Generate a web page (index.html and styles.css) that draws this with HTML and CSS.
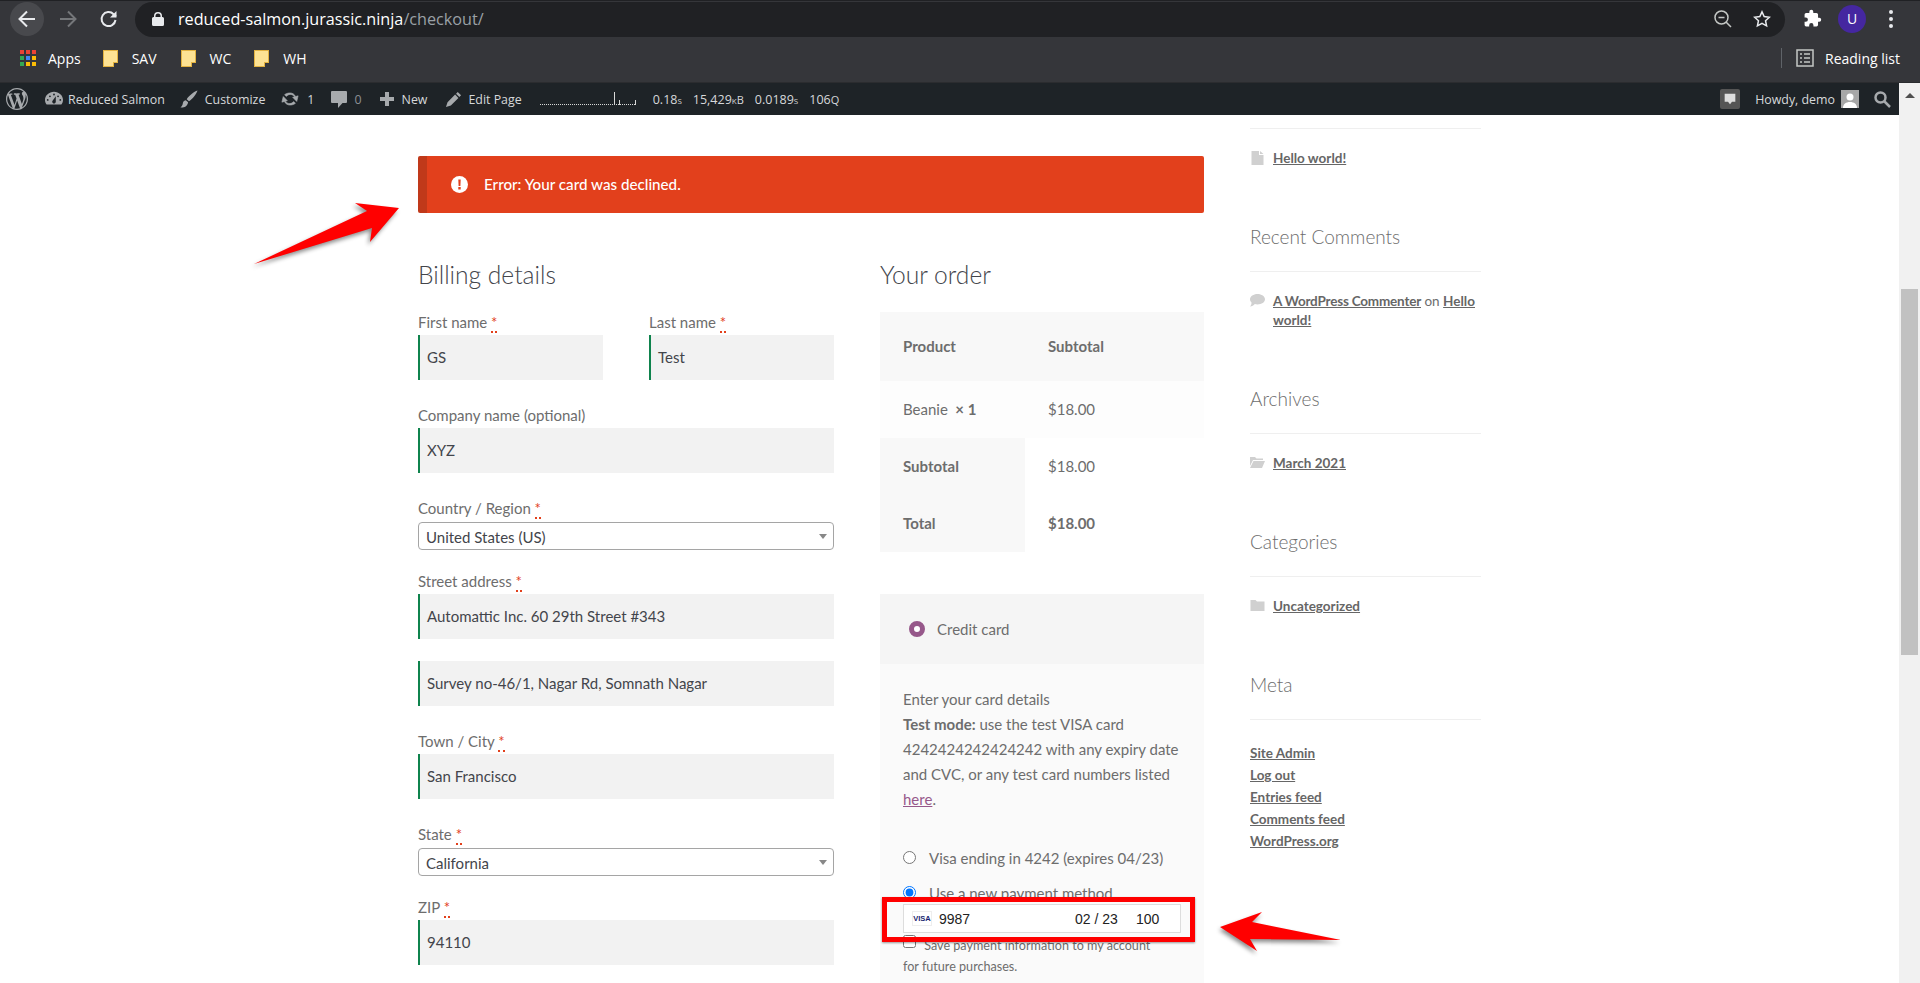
FILE: index.html
```html
<!DOCTYPE html>
<html lang="en">
<head>
    <meta charset="UTF-8">
    <title>Checkout - Reduced Salmon</title>
    <link rel="stylesheet" href="styles.css">
</head>
<body>
    <div class="toolbar">
        <div class="nav-btn nav-back">
            <svg width="20" height="20" viewBox="0 0 20 20" fill="none" stroke="#e8eaed" stroke-width="2"><path d="M18 10H3M10 2.5L2.5 10l7.5 7.5"/></svg>
        </div>
        <div class="nav-btn">
            <svg width="20" height="20" viewBox="0 0 20 20" fill="none" stroke="#75777a" stroke-width="2"><path d="M2 10h15M10 2.5l7.5 7.5-7.5 7.5"/></svg>
        </div>
        <div class="nav-btn">
            <svg width="20" height="20" viewBox="0 0 20 20" fill="none" stroke="#e8eaed" stroke-width="2"><path d="M16.5 11a7 7 0 1 1-1.9-5.8L17 7.5"/><path d="M17.5 2v6.5H11" fill="#e8eaed" stroke="none"/></svg>
        </div>
        <div class="omnibox">
            <svg class="lock" width="12" height="14" viewBox="0 0 12 14"><path d="M2 5V4a4 4 0 0 1 8 0v1h.5A1.500 1.500 0 0 1 12 6.500V12.500A1.500 1.500 0 0 1 10.500 14h-9A1.500 1.500 0 0 1 0 12.500V6.500A1.500 1.500 0 0 1 1.500 5zM3.500 5h5V4a2.500 2.500 0 0 0-5 0z" fill="#e8eaed" fill-rule="evenodd"/></svg>
            <span class="url">reduced-salmon.jurassic.ninja<span class="url-path">/checkout/</span></span>
            <svg class="omni-zoom" width="18" height="18" viewBox="0 0 18 18" fill="none" stroke="#c4c7c5" stroke-width="1.500"><circle cx="7.500" cy="7.500" r="6.500"/><path d="M4.500 7.500h6M12 12l5 5"/></svg>
            <svg class="omni-star" width="18" height="18" viewBox="0 0 24 24" fill="none" stroke="#e8eaed" stroke-width="2"><path d="M12 2.500l2.900 6.300 6.900.8-5.100 4.700 1.400 6.800-6.100-3.400-6.100 3.400 1.400-6.800L2.200 9.600l6.900-.8z"/></svg>
        </div>
        <svg class="puzzle" width="19" height="19" viewBox="0 0 24 24" fill="#fff"><path d="M20.500 11H19V7a2 2 0 0 0-2-2h-4V3.500a2.500 2.500 0 0 0-5 0V5H4a2 2 0 0 0-2 2v3.800h1.500a2.700 2.700 0 0 1 0 5.400H2V20a2 2 0 0 0 2 2h3.800v-1.500a2.700 2.700 0 0 1 5.400 0V22H17a2 2 0 0 0 2-2v-4h1.500a2.500 2.500 0 0 0 0-5z"/></svg>
        <div class="avatar">U</div>
        <div class="menu-dots"><i></i><i></i><i></i></div>
    </div>

    <div class="bookmarks">
        <svg class="apps-icon" width="16" height="16" viewBox="0 0 16 16">
            <rect width="4" height="4" fill="#ea4335"/><rect x="6" width="4" height="4" fill="#ea4335"/><rect x="12" width="4" height="4" fill="#ea4335"/>
            <rect y="6" width="4" height="4" fill="#34a853"/><rect x="6" y="6" width="4" height="4" fill="#4285f4"/><rect x="12" y="6" width="4" height="4" fill="#fbbc05"/>
            <rect y="12" width="4" height="4" fill="#34a853"/><rect x="6" y="12" width="4" height="4" fill="#fbbc05"/><rect x="12" y="12" width="4" height="4" fill="#fbbc05"/>
        </svg>
        <span class="bm-label bm-apps">Apps</span>
        <i class="bm-note"></i><span class="bm-label bm-sav">SAV</span>
        <i class="bm-note"></i><span class="bm-label bm-wc">WC</span>
        <i class="bm-note"></i><span class="bm-label">WH</span>
        <div class="reading-list">
            <svg width="18" height="18" viewBox="0 0 18 18" fill="none" stroke="#c4c7c5" stroke-width="1.500"><rect x="1" y="1" width="16" height="16"/><path d="M4 5h2M8 5h6M4 9h2M8 9h6M4 13h2M8 13h6"/></svg>
            <span>Reading list</span>
        </div>
    </div>

    <div class="viewport">
        <div class="window">
            <div class="adminbar">
                <svg class="ab-wp" width="22" height="22" viewBox="0 0 20 20" fill="#a7aaad"><path d="M20 10c0-5.510-4.490-10-10-10C4.480 0 0 4.490 0 10c0 5.520 4.480 10 10 10 5.510 0 10-4.480 10-10zM7.780 15.370L4.370 6.220c.550-.020 1.170-.080 1.170-.080.500-.060.440-1.130-.060-1.110 0 0-1.450.110-2.370.110-.180 0-.370 0-.580-.010C4.120 2.690 6.870 1.110 10 1.110c2.330 0 4.450.870 6.050 2.340-.680-.110-1.650.390-1.650 1.580 0 .740.450 1.360.900 2.100.350.610.550 1.360.550 2.460 0 1.490-1.400 5-1.400 5l-3.030-8.370c.540-.020.820-.170.820-.170.500-.050.440-1.250-.060-1.220 0 0-1.440.120-2.380.120-.870 0-2.330-.120-2.330-.120-.500-.030-.560 1.200-.060 1.220l.920.080 1.260 3.410zM17.410 10c.240-.640.740-1.870.430-4.250.700 1.290 1.050 2.710 1.050 4.250 0 3.290-1.730 6.240-4.400 7.780.970-2.590 1.940-5.200 2.920-7.780zM6.100 18.090C3.120 16.650 1.110 13.530 1.110 10c0-1.300.230-2.480.720-3.590C3.250 10.300 4.670 14.200 6.100 18.090zm4.030-6.630l2.580 6.980c-.860.290-1.760.450-2.710.450-.790 0-1.570-.110-2.290-.330.810-2.380 1.620-4.740 2.420-7.100z"/></svg>
                <svg class="ab-icon ab-gauge" width="18" height="18" viewBox="0 0 20 20" fill="#a7aaad" fill-rule="evenodd"><path d="M1.800 16h16.400c1.100-1.400 1.800-3.100 1.800-5 0-4.900-4.500-9-10-9S0 6.100 0 11c0 1.900.700 3.600 1.800 5zM10 4a1 1 0 1 1 0 2 1 1 0 0 1 0-2zM5.500 6a1 1 0 1 1 0 2 1 1 0 0 1 0-2zm9 0a1 1 0 1 1 0 2 1 1 0 0 1 0-2zM3 10a1 1 0 1 1 0 2 1 1 0 0 1 0-2zm14 0a1 1 0 1 1 0 2 1 1 0 0 1 0-2zM12 7v6a2 2 0 1 1-3.400-1.400z"/></svg>
                <span class="ab-text ab-site">Reduced Salmon</span>
                <svg class="ab-icon" width="18" height="18" viewBox="0 0 18 18" fill="#a7aaad"><path d="M17.500.500c-3.500 1.200-8.500 5-10.800 8.700l2.300 2C12.800 8.800 16.500 4 17.500.500zM5.800 10.200C3.500 10.500 3 12 2.800 13.500 2.600 15 2 16.300.500 17.500c3 .300 6.800-.400 7.600-5.200z"/></svg>
                <span class="ab-text ab-custom">Customize</span>
                <svg class="ab-icon" width="18" height="18" viewBox="0 0 20 20" fill="#a7aaad" stroke="#a7aaad" stroke-width=".7"><path d="M10.200 3.300c2.700 0 5 1.700 6 4l2.800-.800-1.500 6.200-4.500-4.600 2.200-.500c-.800-1.400-3-2.800-5-2.700-1.700.100-3.200.900-4.200 2.200L4 5.300c1.400-1.300 3.600-2 6.200-2zM2.500 7.300L7 11.900l-2.200.500c.800 1.400 3 2.800 5 2.700 1.700-.100 3.200-.900 4.200-2.200l2 1.800c-1.400 1.300-3.600 2-6.200 2-2.700 0-5-1.700-6-4l-2.800.800z"/></svg>
                <span class="ab-text ab-count">1</span>
                <svg class="ab-icon" width="18" height="18" viewBox="0 0 18 18" fill="#a7aaad"><path d="M2 1h14a1 1 0 0 1 1 1v10a1 1 0 0 1-1 1h-3.500L8 18v-5H2a1 1 0 0 1-1-1V2a1 1 0 0 1 1-1z"/></svg>
                <span class="ab-text ab-zero">0</span>
                <svg class="ab-icon" width="14" height="14" viewBox="0 0 14 14" fill="#a7aaad"><path d="M5 0h4v5h5v4H9v5H5V9H0V5h5z"/></svg>
                <span class="ab-text ab-new">New</span>
                <svg class="ab-icon" width="17" height="17" viewBox="0 0 18 18" fill="#a7aaad"><path d="M13.500 1l3.500 3.500-1.800 1.800-3.500-3.500zM10.700 3.800l3.500 3.500-8 8L1 17l1.700-5.200z"/></svg>
                <span class="ab-text ab-edit">Edit Page</span>
                <svg class="ab-chart" width="96" height="14" viewBox="0 0 96 14" fill="none" stroke="#d8d8d8"><path d="M0 13.500h96" stroke-dasharray="1 1"/><path d="M74.500 1v13M79.500 9v5M95.500 9v5"/></svg>
                <span class="ab-stat">0.18<small>s</small></span>
                <span class="ab-stat">15,429<small>kB</small></span>
                <span class="ab-stat">0.0189<small>s</small></span>
                <span class="ab-stat">106<small>Q</small></span>
                <div class="ab-right">
                    <div class="ab-note"><svg width="12" height="12" viewBox="0 0 18 18" fill="#ddd"><path d="M1 1h16v12h-5l-3 4-3-4H1z"/></svg></div>
                    <span class="ab-text ab-howdy">Howdy, demo</span>
                    <div class="ab-avatar"><svg width="16" height="16" viewBox="0 0 16 16" fill="#fff"><circle cx="8" cy="5" r="3.500"/><path d="M1 16c0-4 3-6 7-6s7 2 7 6z"/></svg></div>
                    <svg class="ab-search" width="17" height="17" viewBox="0 0 17 17" fill="none" stroke="#a7aaad" stroke-width="2.500"><circle cx="6.500" cy="6.500" r="5"/><path d="M10.500 10.500l5.500 5.500"/></svg>
                </div>
            </div>

            <div class="page">
                <main class="main">
                    <div class="notice">
                        <svg width="17" height="17" viewBox="0 0 17 17"><circle cx="8.500" cy="8.500" r="8.500" fill="#fff"/><path d="M7.300 3.500h2.400l-.3 6.500H7.600zM7.300 11h2.400v2.400H7.300z" fill="#e2401c"/></svg>
                        <span>Error: Your card was declined.</span>
                    </div>

                    <div class="checkout">
                        <section class="billing">
                            <h3>Billing details</h3>
                            <div class="field-row">
                                <div class="field">
                                    <label>First name <abbr>*</abbr></label>
                                    <div class="input-box">GS</div>
                                </div>
                                <div class="field">
                                    <label>Last name <abbr>*</abbr></label>
                                    <div class="input-box">Test</div>
                                </div>
                            </div>
                            <div class="field">
                                <label>Company name (optional)</label>
                                <div class="input-box">XYZ</div>
                            </div>
                            <div class="field field-select">
                                <label>Country / Region <abbr>*</abbr></label>
                                <div class="select-box">United States (US)</div>
                            </div>
                            <div class="field">
                                <label>Street address <abbr>*</abbr></label>
                                <div class="input-box">Automattic Inc. 60 29th Street #343</div>
                            </div>
                            <div class="field">
                                <div class="input-box">Survey no-46/1, Nagar Rd, Somnath Nagar</div>
                            </div>
                            <div class="field">
                                <label>Town / City <abbr>*</abbr></label>
                                <div class="input-box">San Francisco</div>
                            </div>
                            <div class="field field-select">
                                <label>State <abbr>*</abbr></label>
                                <div class="select-box">California</div>
                            </div>
                            <div class="field">
                                <label>ZIP <abbr>*</abbr></label>
                                <div class="input-box">94110</div>
                            </div>
                        </section>

                        <section class="order">
                            <h3>Your order</h3>
                            <table class="order-table">
                                <thead>
                                    <tr><th>Product</th><th>Subtotal</th></tr>
                                </thead>
                                <tbody>
                                    <tr><td>Beanie <strong>&nbsp;× 1</strong></td><td>$18.00</td></tr>
                                </tbody>
                                <tfoot>
                                    <tr><th>Subtotal</th><td>$18.00</td></tr>
                                    <tr><th>Total</th><td><strong>$18.00</strong></td></tr>
                                </tfoot>
                            </table>

                            <div class="payment">
                                <div class="payment-head">
                                    <span class="pay-radio"></span>
                                    <span>Credit card</span>
                                </div>
                                <div class="payment-body">
                                    <p>Enter your card details<br>
                                    <strong>Test mode:</strong> use the test VISA card 4242424242424242 with any expiry date and CVC, or any test card numbers listed <a href="#">here</a>.</p>
                                    <div class="saved-row"><input type="radio" name="card"><span>Visa ending in 4242 (expires 04/23)</span></div>
                                    <div class="saved-row"><input type="radio" name="card" checked><span>Use a new payment method</span></div>
                                    <div class="card-input">
                                        <span class="visa-logo">VISA</span>
                                        <span class="card-num">9987</span>
                                        <span class="card-exp">02 / 23</span>
                                        <span class="card-cvc">100</span>
                                    </div>
                                    <div class="save-row">
                                        <input type="checkbox">
                                        <span>Save payment information to my account<br>for future purchases.</span>
                                    </div>
                                </div>
                            </div>
                        </section>
                    </div>
                </main>

                <aside class="sidebar">
                    <div class="widget-line"></div>
                    <ul class="widget-list widget-first">
                        <li>
                            <svg width="12" height="14" viewBox="0 0 12 14" fill="#d0d0d0"><path d="M0 0h7.500v4H12v10H0zM8.500 0L12 3H8.500z"/></svg>
                            <a href="#">Hello world!</a>
                        </li>
                    </ul>
                    <h4>Recent Comments</h4>
                    <ul class="widget-list">
                        <li>
                            <svg class="icon-comment" width="15" height="13" viewBox="0 0 15 13" fill="#d0d0d0"><path d="M7.500 0C11.600 0 15 2.300 15 5.200s-3.400 5.200-7.500 5.200c-1 0-1.900-.1-2.700-.4C3.600 11.500 2 12.500 0 12.500c1-1 1.600-2.200 1.500-4C.6 7.600 0 6.500 0 5.200 0 2.300 3.400 0 7.500 0z"/></svg>
                            <span><a class="commenter" href="#">A WordPress Commenter</a> on <a href="#">Hello world!</a></span>
                        </li>
                    </ul>
                    <h4>Archives</h4>
                    <ul class="widget-list">
                        <li>
                            <svg width="15" height="12" viewBox="0 0 15 12" fill="#d0d0d0"><path d="M0 1h5l1.500 1.500H13V4H3L0 10zM3.500 5H15l-3 7H0z"/></svg>
                            <a href="#">March 2021</a>
                        </li>
                    </ul>
                    <h4>Categories</h4>
                    <ul class="widget-list">
                        <li>
                            <svg width="14" height="12" viewBox="0 0 14 12" fill="#d0d0d0"><path d="M0 1h5l1.500 1.500H14V12H0z"/></svg>
                            <a href="#">Uncategorized</a>
                        </li>
                    </ul>
                    <h4>Meta</h4>
                    <ul class="meta-list">
                        <li><a href="#">Site Admin</a></li>
                        <li><a href="#">Log out</a></li>
                        <li><a href="#">Entries feed</a></li>
                        <li><a href="#">Comments feed</a></li>
                        <li><a href="#">WordPress.org</a></li>
                    </ul>
                </aside>

                <!-- screenshot annotations -->
                <svg class="arrow arrow-left" width="160" height="75" viewBox="0 0 160 75"><path d="M148 11L104 6l12 8L3 67l118-36-2 14z" fill="#ff0000" style="filter: drop-shadow(-2px 3px 2px rgba(0,0,0,.45))"/></svg>
                <div class="red-box"></div>
                <svg class="arrow arrow-right" width="130" height="50" viewBox="0 0 130 50"><path d="M5 20l42-15-10 10 89 18-91-1 7 12z" fill="#ff0000" style="filter: drop-shadow(-1px 3px 2px rgba(0,0,0,.45))"/></svg>
            </div>
        </div>
        <div class="scrollbar">
            <i class="scroll-up"></i>
            <div class="scroll-thumb"></div>
        </div>
    </div>
</body>
</html>
```

FILE: styles.css
```css
/* general */
html, body {
    margin: 0;
    height: 983px;
    overflow: hidden;
}

body {
    font-family: 'Lato', sans-serif;
    font-size: 15px;
    color: #6d6d6d;
    background-color: #35363a;
}

/* browser chrome */
.toolbar {
    height: 35px;
    border-top: 1px solid #202124;
    background-color: #35363a;
    display: flex;
    align-items: center;
    padding-left: 10px;
    font-family: 'Open Sans', sans-serif;
}

.nav-btn {
    width: 34px;
    height: 34px;
    border-radius: 50%;
    display: flex;
    align-items: center;
    justify-content: center;
}

.nav-btn + .nav-btn {
    margin-left: 7px;
}

.nav-back {
    background-color: #48494d;
}

.omnibox {
    width: 1650px;
    height: 35px;
    margin-left: 9px;
    margin-top: 1px;
    border-radius: 18px;
    background-color: #202124;
    display: flex;
    align-items: center;
    color: #fff;
    font-size: 16.2px;
}

.lock {
    margin-left: 17px;
    margin-right: 14px;
}

.url-path {
    color: #9aa0a6;
}

.omni-zoom {
    margin-left: auto;
}

.omni-star {
    margin-left: 21px;
    margin-right: 14px;
}

.puzzle {
    margin-left: 18px;
}

.avatar {
    width: 28px;
    height: 28px;
    margin-left: 16px;
    border-radius: 50%;
    background-color: #4527a0;
    color: #fff;
    font-size: 14px;
    display: flex;
    align-items: center;
    justify-content: center;
}

.menu-dots {
    margin-left: 23px;
    display: flex;
    flex-direction: column;
    gap: 3px;
}

.menu-dots i {
    width: 4px;
    height: 4px;
    border-radius: 50%;
    background-color: #e8eaed;
}

.bookmarks {
    height: 44px;
    padding-bottom: 2px;
    border-bottom: 1px solid #2b2c2f;
    background-color: #35363a;
    display: flex;
    align-items: center;
    padding-left: 20px;
    font-family: 'Open Sans', sans-serif;
    font-size: 14px;
    color: #fff;
}

.apps-icon {
    margin-right: 12px;
}

.bm-note {
    position: relative;
    width: 15px;
    height: 17px;
    background-color: #fde293;
    border: 1px solid #e3b341;
    box-sizing: border-box;
    margin-right: 14px;
}

.bm-note::after {
    content: "";
    position: absolute;
    right: -1px;
    bottom: -1px;
    width: 4px;
    height: 4px;
    background-color: #35363a;
    border-top: 1px solid #e3b341;
    border-left: 1px solid #e3b341;
}

.bm-label {
    margin-right: 27px;
}

.bm-apps {
    margin-right: 22px;
}

.bm-sav {
    margin-right: 24px;
}

.bm-wc {
    margin-right: 23px;
}

.reading-list {
    margin-left: auto;
    width: 139px;
    height: 20px;
    box-sizing: border-box;
    border-left: 1px solid #5f6368;
    padding-left: 14px;
    display: flex;
    align-items: center;
    gap: 11px;
}

/* wordpress window */
.viewport {
    display: flex;
    height: 901px;
}

.window {
    width: 1899px;
}

.adminbar {
    height: 32px;
    background-color: #1e2327;
    display: flex;
    align-items: center;
    padding-left: 6px;
    font-family: 'Open Sans', sans-serif;
    font-size: 12.4px;
    color: #d6d8da;
}

.ab-icon {
    flex: none;
}

.ab-gauge { margin-left: 17px; margin-right: 5px; }
.ab-site { margin-right: 15px; }
.ab-custom { margin-left: 7px; margin-right: 16px; }
.ab-count { margin-left: 8px; margin-right: 16px; }
.ab-zero { margin-left: 6px; margin-right: 18px; color: #8c8f94; }
.ab-new { margin-left: 8px; margin-right: 18px; }
.ab-edit { margin-left: 6px; margin-right: 18px; }

.ab-chart {
    margin-top: -2px;
    margin-right: 17px;
}

.ab-stat {
    margin-right: 11px;
    font-size: 12.5px;
}

.ab-stat small {
    font-size: 11px;
    font-variant: small-caps;
}

.ab-right {
    margin-left: auto;
    display: flex;
    align-items: center;
}

.ab-note {
    width: 20px;
    height: 20px;
    border-radius: 2px;
    background-color: #555;
    display: flex;
    align-items: center;
    justify-content: center;
    margin-right: 15px;
}

.ab-avatar {
    width: 18px;
    height: 18px;
    margin-left: 6px;
    background-color: #a7a7a7;
    display: flex;
    align-items: flex-end;
    justify-content: center;
    overflow: hidden;
}

.ab-search {
    margin-left: 15px;
    margin-right: 8px;
}

.page {
    position: relative;
    height: 868px;
    overflow: hidden;
    background-color: #fff;
    display: flex;
}

.main {
    width: 786px;
    margin-left: 418px;
    flex: none;
}

.notice {
    height: 57px;
    margin-top: 41px;
    padding: 0 0 1px 24px;
    box-sizing: border-box;
    border-left: 9px solid #c0391a;
    border-radius: 2px;
    background-color: #e2401c;
    color: #fff;
    font-size: 15.2px;
    font-weight: 500;
    display: flex;
    align-items: center;
    gap: 16px;
}

.checkout {
    display: flex;
    justify-content: space-between;
}

.billing {
    width: 416px;
}

.order {
    width: 324px;
}

h3 {
    margin: 45px 0 17px 0;
    font-size: 24.6px;
    line-height: 34px;
    font-weight: 300;
    color: #43454b;
}

/* form fields */
.field-row {
    display: flex;
    justify-content: space-between;
}

.field-row .field {
    width: 185px;
}

.field {
    margin-bottom: 22px;
}

.field-select {
    margin-bottom: 18px;
}

.field label {
    display: block;
    height: 26px;
    line-height: 26px;
}

.field abbr {
    color: #e2401c;
    border-bottom: 2px dotted #e2401c;
    line-height: 1;
}

.input-box {
    height: 45px;
    box-sizing: border-box;
    border-left: 2px solid #0f834d;
    padding-left: 7px;
    background-color: #f2f2f2;
    color: #43454b;
    line-height: 45px;
}

.select-box {
    position: relative;
    height: 28px;
    margin-top: 1px;
    box-sizing: border-box;
    border: 1px solid #a5a5a5;
    border-radius: 4px;
    padding: 2px 0 0 7px;
    background-color: #fff;
    color: #43454b;
    line-height: 24px;
}

.select-box::after {
    content: "";
    position: absolute;
    right: 6px;
    top: 11px;
    border-left: 4px solid transparent;
    border-right: 4px solid transparent;
    border-top: 5px solid #888;
}

/* order table */
.order-table {
    width: 100%;
    margin-top: 20px;
    border-collapse: collapse;
    table-layout: fixed;
}

.order-table th,
.order-table td {
    height: 55px;
    padding: 0 0 2px 23px;
    text-align: left;
    font-size: 15px;
}

.order-table th:first-child,
.order-table td:first-child {
    width: 122px;
}

.order-table thead th {
    height: 67px;
    background-color: #f8f8f8;
}

.order-table tbody td {
    background-color: #fdfdfd;
}

.order-table tfoot th {
    background-color: #f8f8f8;
}

/* payment */
.payment {
    margin-top: 42px;
}

.payment-head {
    height: 70px;
    background-color: #f5f5f5;
    display: flex;
    align-items: center;
    padding-left: 29px;
    gap: 12px;
}

.pay-radio {
    width: 16px;
    height: 16px;
    box-sizing: border-box;
    border: 5px solid #96588a;
    border-radius: 50%;
    background-color: #fff;
}

.payment-body {
    height: 400px;
    padding: 23px 23px 0 23px;
    background-color: #fafafa;
}

.payment-body p {
    margin: 0 0 28px 0;
    line-height: 25px;
}

.payment-body a {
    color: #96588a;
}

.saved-row {
    height: 35px;
    display: flex;
    align-items: center;
    gap: 13px;
}

.saved-row input {
    margin: 0;
}

.card-input {
    height: 29px;
    margin-top: -6px;
    box-sizing: border-box;
    border: 1px solid #ddd;
    background-color: #fff;
    display: flex;
    align-items: center;
    padding-left: 8px;
    font-family: 'Liberation Sans', sans-serif;
    font-size: 14px;
    color: #222;
}

.visa-logo {
    width: 20px;
    height: 15px;
    border: 1px solid #eee;
    box-sizing: border-box;
    color: #1a1f71;
    font-size: 7.5px;
    font-weight: bold;
    line-height: 13px;
    text-align: center;
}

.card-num {
    margin-left: 7px;
    width: 136px;
}

.card-exp {
    width: 61px;
}

.save-row {
    margin-top: 2px;
    font-size: 12.6px;
    line-height: 21px;
}

.save-row input {
    margin: 0 5px 0 0;
    vertical-align: 2px;
}

/* sidebar */
.sidebar {
    width: 231px;
    margin-left: 46px;
    flex: none;
    padding-top: 13px;
}

.widget-line {
    height: 1px;
    background-color: #efefef;
}

.sidebar h4 {
    margin: 57px 0 0 0;
    height: 46px;
    line-height: 24px;
    font-size: 19px;
    font-weight: 300;
    color: #6d6d6d;
    border-bottom: 1px solid #efefef;
}

.widget-list {
    list-style: none;
    margin: 0;
    padding: 20px 0 0 0;
    font-size: 13.5px;
}

.widget-list li {
    display: flex;
    align-items: flex-start;
    gap: 8px;
    line-height: 19px;
}

.widget-list svg {
    flex: none;
    width: 15px;
    margin-top: 2px;
}

.sidebar a {
    color: #666;
    font-weight: 700;
}

.sidebar .commenter {
    letter-spacing: -0.2px;
}

.meta-list {
    list-style: none;
    margin: 0;
    padding: 22px 0 0 0;
    font-size: 13.5px;
    line-height: 22px;
}

/* red marks drawn on the screenshot */
.arrow {
    position: absolute;
    overflow: visible;
}

.arrow-left {
    left: 251px;
    top: 82px;
}

.arrow-right {
    left: 1215px;
    top: 792px;
}

.red-box {
    position: absolute;
    left: 882px;
    top: 782px;
    width: 313px;
    height: 45px;
    box-sizing: border-box;
    border: 5px solid #ff0000;
    box-shadow: 0 1px 2px rgba(0, 0, 0, 0.4);
}

/* scrollbar */
.scrollbar {
    width: 21px;
    background-color: #f1f1f1;
    position: relative;
}

.scroll-up {
    display: block;
    width: 0;
    margin: 10px auto 0 auto;
    border-left: 5px solid transparent;
    border-right: 5px solid transparent;
    border-bottom: 5px solid #505050;
}

.scroll-thumb {
    width: 17px;
    height: 366px;
    margin: 191px 0 0 2px;
    background-color: #c1c1c1;
}
```
